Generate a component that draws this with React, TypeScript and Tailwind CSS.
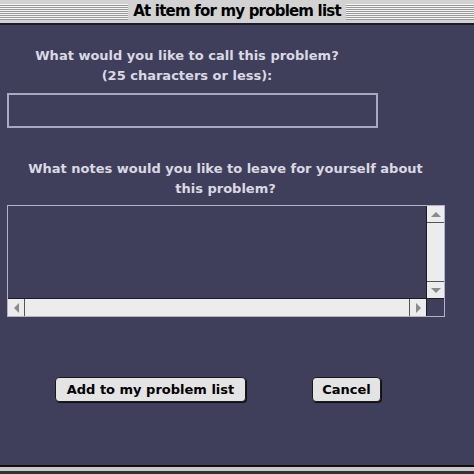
export default function App() {
  const font = { fontFamily: '"DejaVu Sans", Verdana, sans-serif' };
  return (
    <div className="w-[474px] h-[474px] bg-[#403f5b] flex flex-col overflow-hidden" style={font}>
      {/* title bar */}
      <div className="h-[23px] bg-[#d2d2d2] flex items-center shrink-0">
        <div className="flex-1 h-[16px] bg-[repeating-linear-gradient(to_bottom,#f4f4f4_0px,#f4f4f4_1px,#9a9a9a_1px,#9a9a9a_2px)]" />
        <div className="px-[5px] text-[15px] font-bold text-black leading-none tracking-[-0.8px]">At item for my problem list</div>
        <div className="flex-1 h-[16px] bg-[repeating-linear-gradient(to_bottom,#f4f4f4_0px,#f4f4f4_1px,#9a9a9a_1px,#9a9a9a_2px)]" />
      </div>
      <div className="h-[2px] bg-[#1c1c24] shrink-0" />

      <div className="flex-1 flex flex-col pl-[7px]">
        <div className="w-[360px] mt-[21px] text-center text-[13px] font-bold leading-[20px] text-[#d9d9e3]">
          What would you like to call this problem?
          <br />
          (25 characters or less):
        </div>
        <div className="w-[371px] h-[35px] mt-[7px] border-2 border-[#a9a8bf]" />

        <div className="w-[437px] mt-[31px] text-center text-[13px] font-bold leading-[20px] text-[#d9d9e3]">
          What notes would you like to leave for yourself about
          <br />
          this problem?
        </div>

        {/* text area with scrollbars */}
        <div className="w-[438px] h-[112px] mt-[6px] border border-[#b4b3c6] flex flex-col">
          <div className="flex-1 flex">
            <div className="flex-1" />
            <div className="w-[18px] bg-[#ececec] border-l border-[#1c1c24] flex flex-col">
              <div className="h-[17px] border-b border-[#555] flex items-center justify-center">
                <div className="w-0 h-0 border-l-[5px] border-r-[5px] border-b-[5px] border-l-transparent border-r-transparent border-b-[#8a8a8a]" />
              </div>
              <div className="flex-1" />
              <div className="h-[17px] border-t border-[#555] flex items-center justify-center">
                <div className="w-0 h-0 border-l-[5px] border-r-[5px] border-t-[5px] border-l-transparent border-r-transparent border-t-[#8a8a8a]" />
              </div>
            </div>
          </div>
          <div className="h-[18px] flex border-t border-[#1c1c24]">
            <div className="flex-1 bg-[#ececec] flex">
              <div className="w-[17px] border-r border-[#555] flex items-center justify-center">
                <div className="w-0 h-0 border-t-[5px] border-b-[5px] border-r-[5px] border-t-transparent border-b-transparent border-r-[#8a8a8a]" />
              </div>
              <div className="flex-1" />
              <div className="w-[17px] border-l border-[#555] flex items-center justify-center">
                <div className="w-0 h-0 border-t-[5px] border-b-[5px] border-l-[5px] border-t-transparent border-b-transparent border-l-[#8a8a8a]" />
              </div>
            </div>
            <div className="w-[18px] border-l border-[#1c1c24]" />
          </div>
        </div>

        {/* buttons */}
        <div className="flex mt-[60px] pl-[48px] gap-[66px]">
          <div className="w-[191px] h-[25px] rounded-[4px] border border-[#1a1a1a] bg-[#e4e4e4] shadow-[1px_1px_0_#111] flex items-center justify-center text-[13px] font-bold text-black">
            Add to my problem list
          </div>
          <div className="w-[69px] h-[25px] rounded-[4px] border border-[#1a1a1a] bg-[#e4e4e4] shadow-[1px_1px_0_#111] flex items-center justify-center text-[13px] font-bold text-black">
            Cancel
          </div>
        </div>
        <div className="flex-1" />
      </div>

      {/* bottom window edge */}
      <div className="h-[2px] bg-[#111] shrink-0" />
      <div className="h-[4px] bg-[#c9c9c9] shrink-0" />
      <div className="h-[3px] bg-[#333] shrink-0" />
    </div>
  );
}
